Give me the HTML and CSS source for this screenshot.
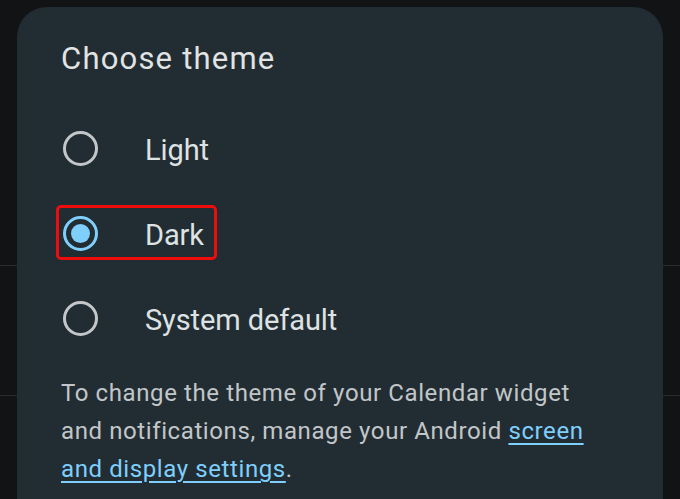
FILE: index.html
```html
<!DOCTYPE html>
<html>
<head>
<meta charset="utf-8">
<link rel="stylesheet" href="styles.css">
</head>
<body>
<div class="backdrop">
  <div class="bg-row bg-row-1"></div>
  <div class="bg-row bg-row-2"></div>
  <div class="bg-row bg-row-3"></div>
</div>
<div class="dialog">
  <h1 class="title">Choose theme</h1>
  <div class="options">
    <div class="option">
      <span class="radio"></span>
      <span class="label">Light</span>
    </div>
    <div class="option selected">
      <span class="radio checked"><span class="dot"></span></span>
      <span class="label">Dark</span>
      <span class="highlight"></span>
    </div>
    <div class="option">
      <span class="radio"></span>
      <span class="label">System default</span>
    </div>
  </div>
  <p class="note">To change the theme of your Calendar widget and notifications, manage your Android <a class="link" href="#">screen and display settings</a>.</p>
</div>
</body>
</html>
```
FILE: styles.css
```css
html, body {
  margin: 0;
  padding: 0;
  height: 100%;
  overflow: hidden;
}
body {
  background: #121314;
  font-family: Roboto, "Noto Sans", sans-serif;
  position: relative;
}
.backdrop {
  display: flex;
  flex-direction: column;
}
.bg-row-1 { height: 265px; border-bottom: 1px solid #2a2c2d; }
.bg-row-2 { height: 129px; border-bottom: 1px solid #2a2c2d; }
.bg-row-3 { height: 100px; }
.dialog {
  position: absolute;
  left: 17px;
  top: 7px;
  width: 646px;
  height: 560px;
  background: #222d33;
  border-radius: 30px;
  box-sizing: border-box;
  padding: 33px 60px 0 44px;
}
.title {
  margin: 0;
  font-weight: 400;
  font-size: 31px;
  line-height: 38px;
  letter-spacing: 1.2px;
  color: #e2e3e3;
}
.options {
  display: flex;
  flex-direction: column;
  margin-top: 28px;
}
.option {
  position: relative;
  display: flex;
  align-items: center;
  height: 85px;
}
.radio {
  width: 35px;
  height: 35px;
  margin-left: 2px;
  box-sizing: border-box;
  border: 3px solid #c3c7ca;
  border-radius: 50%;
  display: flex;
  align-items: center;
  justify-content: center;
  flex: none;
}
.radio.checked {
  border-color: #7fcffd;
}
.dot {
  width: 19px;
  height: 19px;
  border-radius: 50%;
  background: #7fcffd;
}
.label {
  margin-left: 47px;
  padding-top: 2px;
  font-size: 29px;
  letter-spacing: -0.1px;
  color: #dfe2e3;
}
.highlight {
  position: absolute;
  left: -5px;
  top: 14px;
  width: 161px;
  height: 55px;
  box-sizing: border-box;
  border: 3px solid #ee0c0c;
  border-radius: 5px;
}
.note {
  margin: 13px 0 0 0;
  font-size: 24px;
  line-height: 38px;
  letter-spacing: 0.6px;
  color: #c2c6c8;
}
.link {
  color: #7fcffd;
  text-decoration: underline;
  text-underline-offset: 4px;
  text-decoration-thickness: 2px;
}
```
